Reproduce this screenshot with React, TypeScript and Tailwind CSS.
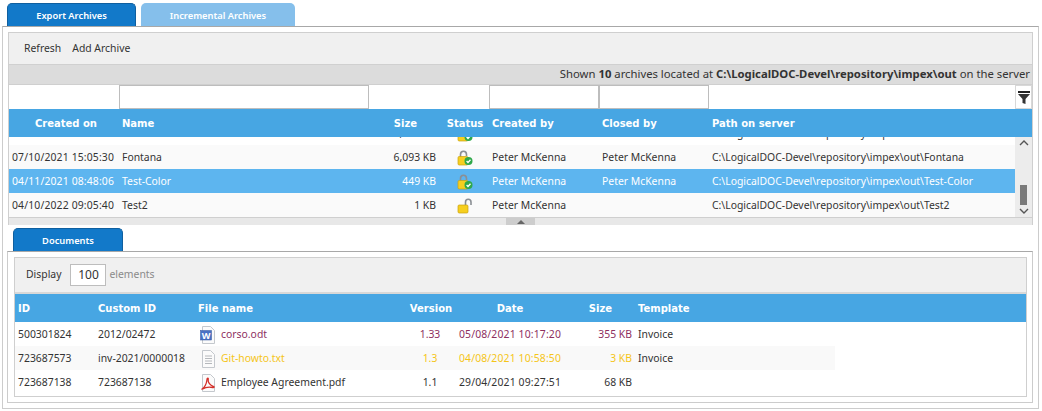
const ui = '"Noto Sans", "Open Sans", sans-serif';

function Lock({ ok }: { ok?: boolean }) {
  return (
    <svg width="16" height="16" viewBox="0 0 16 16" className="shrink-0">
      <path d="M3.500 8V4.600C3.500 2.600 4.800 1.300 6.500 1.300s3 1.300 3 3.300V6" fill="none" stroke="#8b8f94" strokeWidth="1.600" />
      <rect x="1" y="6.500" width="10" height="8.500" rx="1.200" fill="#f6cf1f" stroke="#c9a00e" strokeWidth="0.700" />
      {ok && <circle cx="11.500" cy="11" r="4" fill="#2fa84a" />}
      {ok && <path d="M9.600 11l1.400 1.500 2.500-2.800" fill="none" stroke="#fff" strokeWidth="1.300" />}
    </svg>
  );
}

function OpenLock() {
  return (
    <svg width="16" height="16" viewBox="0 0 16 16" className="shrink-0">
      <path d="M8.500 8V4C8.500 2.400 9.700 1.300 11.200 1.300S14 2.400 14 4v3" fill="none" stroke="#8b8f94" strokeWidth="1.600" />
      <rect x="1" y="7" width="10" height="8" rx="1.200" fill="#f6cf1f" stroke="#c9a00e" strokeWidth="0.700" />
    </svg>
  );
}

function FileIcon({ type }: { type: string }) {
  return (
    <svg width="16" height="18" viewBox="0 0 16 18">
      <path d="M2.500.5h8l4 4v13h-12z" fill="#fbfbfb" stroke="#c4c8cd" />
      {type === 'word' && <rect x="0.500" y="4.500" width="11" height="9.500" fill="#4a72c4" stroke="#33549c" strokeWidth="0.500" />}
      {type === 'word' && <text x="6" y="12.500" textAnchor="middle" fontSize="9" fontWeight="700" fill="#ffffff">W</text>}
      {type === 'txt' && <path d="M5 6h7M5 8.500h7M5 11h7M5 13.500h7" stroke="#b5b8bc" />}
      {type === 'pdf' && (
        <path d="M1.500 15.500C4 14 6.500 10 7 5.500c.2-2 1.600-1.500 1.200 0-.5 3 2 6 5 6.800 1.500.4 1 1.500-.5 1.200-3-.5-7-.5-10 1.500" fill="none" stroke="#d4302a" strokeWidth="1.300" />
      )}
    </svg>
  );
}

const archives = [
  { date: '07/10/2021 15:05:30', name: 'Fontana', size: '6,093 KB', closed: 'Peter McKenna', icon: 'ok' },
  { date: '04/11/2021 08:48:06', name: 'Test-Color', size: '449 KB', closed: 'Peter McKenna', icon: 'ok', selected: true },
  { date: '04/10/2022 09:05:40', name: 'Test2', size: '1 KB', closed: '', icon: 'open' },
];

const documents = [
  { id: '500301824', custom: '2012/02472', file: 'corso.odt', type: 'word', version: '1.33', date: '05/08/2021 10:17:20', size: '355 KB', template: 'Invoice', color: 'text-[#8e2f5f]' },
  { id: '723687573', custom: 'inv-2021/0000018', file: 'Git-howto.txt', type: 'txt', version: '1.3', date: '04/08/2021 10:58:50', size: '3 KB', template: 'Invoice', color: 'text-[#f5c518]', shaded: true },
  { id: '723687138', custom: '723687138', file: 'Employee Agreement.pdf', type: 'pdf', version: '1.1', date: '29/04/2021 09:27:51', size: '68 KB', template: '', color: 'text-[#333333]' },
];

function ArchiveCells({ a }: { a: { date: string; name: string; size: string; closed: string; icon: string } }) {
  return (
    <>
      <div className="w-[110px] pl-[3px] tracking-[0.15px]">{a.date}</div>
      <div className="w-[250px] pl-[3px]">{a.name}</div>
      <div className="w-[70px] text-right pr-[3px]">{a.size}</div>
      <div className="w-[50px] flex justify-center pl-[2px]">{a.icon === 'ok' ? <Lock ok /> : <OpenLock />}</div>
      <div className="w-[110px] pl-[3px]">Peter McKenna</div>
      <div className="w-[110px] pl-[3px]">{a.closed}</div>
      <div className="flex-1 pl-[3px]">C:\LogicalDOC-Devel\repository\impex\out\{a.name}</div>
    </>
  );
}

export default function App() {
  return (
    <div className="w-[1042px] h-[411px] bg-white text-[#333333] text-[10.4px] overflow-hidden pt-[3px] pl-[2px]" style={{ fontFamily: ui }}>
      <div className="flex pl-[5px] gap-[5px] h-[23px] font-semibold text-[9.300px] text-white">
        <div className="w-[129px] pt-[1px] rounded-t-[5px] bg-[#1279c9] border border-[#0f5f9f] border-b-0 flex items-center justify-center">Export Archives</div>
        <div className="w-[154px] pt-[2px] rounded-t-[5px] bg-[#85bfeb] flex items-center justify-center">Incremental Archives</div>
      </div>

      <div className="w-[1037px] h-[383px] border border-[#cccccc] border-t-[#a8a8a8] pt-[5px] pl-[5px]">
        <div className="w-[1025px] border border-[#cfcfcf] border-b-0">
          <div className="h-[32px] bg-[#f0f0f0] border-b border-[#d0d0d0] flex items-center gap-[11px] pl-[15px]">
            <span>Refresh</span>
            <span>Add Archive</span>
          </div>
          <div className="h-[20px] bg-[#dcdcdc] border-b border-[#cfcfcf] flex items-center justify-end pr-[2px] text-[11.300px]">
            <span>Shown <b>10</b> archives located at <b>C:\LogicalDOC-Devel\repository\impex\out</b> on the server</span>
          </div>

          <div className="h-[24px] flex bg-white">
            <div className="w-[110px]" />
            <div className="w-[250px] border border-[#bdbdbd]" />
            <div className="w-[120px]" />
            <div className="w-[110px] border border-[#bdbdbd]" />
            <div className="w-[110px] border border-[#bdbdbd]" />
            <div className="flex-1" />
            <div className="w-[17px] flex items-center justify-center border border-[#d8d8d8]">
              <svg width="14" height="15" viewBox="0 0 14 15">
                <path d="M1 1h12v2H1z" fill="#222222" />
                <path d="M1 4h12L8.500 9v5l-3-1V9z" fill="#333333" />
              </svg>
            </div>
          </div>

          <div className="h-[28px] bg-[#47a6e3] flex items-center text-white font-bold text-[10px]" style={{ fontFamily: '"DejaVu Sans", sans-serif' }}>
            <div className="w-[110px] text-center pl-[4px]">Created on</div>
            <div className="w-[250px] pl-[3px]">Name</div>
            <div className="w-[70px] text-right pr-[22px]">Size</div>
            <div className="w-[50px] text-center pl-[2px]">Status</div>
            <div className="w-[110px] pl-[3px]">Created by</div>
            <div className="w-[110px] pl-[3px]">Closed by</div>
            <div className="flex-1 pl-[3px]">Path on server</div>
          </div>

          <div className="flex h-[81px] border-b border-[#cfcfcf]">
            <div className="w-[1006px] overflow-hidden">
              <div className="h-[8px] overflow-hidden flex flex-col justify-end">
                <div className="h-[24px] pt-[1px] shrink-0 flex items-center">
                  <ArchiveCells a={{ date: '07/10/2021 14:52:11', name: 'Default', size: '2,310 KB', closed: 'Peter McKenna', icon: 'ok' }} />
                </div>
              </div>
              {archives.map((a) => (
                <div key={a.name} className={`h-[24px] pt-[1px] flex items-center ${a.selected ? 'bg-[#5db5ef] text-white' : 'bg-[#fafafa]'}`}>
                  <ArchiveCells a={a} />
                </div>
              ))}
            </div>
            <div className="flex-1 bg-[#ececec] flex flex-col items-center justify-between py-[3px]">
              <svg width="10" height="6" viewBox="0 0 10 6"><path d="M1 5l4-4 4 4" fill="none" stroke="#555" strokeWidth="1.400" /></svg>
              <div className="flex-1 flex flex-col justify-end pb-[3px]">
                <div className="w-[7px] h-[20px] bg-[#7a7a7a]" />
              </div>
              <svg width="10" height="6" viewBox="0 0 10 6"><path d="M1 1l4 4 4-4" fill="none" stroke="#555" strokeWidth="1.400" /></svg>
            </div>
          </div>

          <div className="h-[7px] bg-[#e8e8e8] flex justify-center">
            <div className="w-[29px] h-[7px] bg-[#cdcdcd] flex items-center justify-center">
              <div className="w-0 h-0 border-x-[4px] border-x-transparent border-b-[4px] border-b-[#666666]" />
            </div>
          </div>
        </div>

        <div className="pl-[5px] pt-[3px] h-[26px]">
          <div className="w-[110px] h-[23px] pt-[1px] rounded-t-[5px] bg-[#1279c9] border border-[#0f5f9f] border-b-0 flex items-center justify-center text-white font-semibold text-[9.300px]">Documents</div>
        </div>

        <div className="w-[1026px] h-[152px] -ml-[1px] border border-[#cccccc] border-t-[#a8a8a8] pt-[5px] pl-[6px] pr-[5px]">
          <div className="h-[140px] border border-[#cfcfcf]">
            <div className="h-[36px] bg-[#f0f0f0] border-b-2 border-[#d8d8d8] flex items-center pl-[11px]">
              <span>Display</span>
              <div className="w-[36px] h-[22px] ml-[9px] border border-[#bdbdbd] bg-white flex items-center justify-center text-[12px]">100</div>
              <span className="ml-[3px] text-[#8a8a8a]">elements</span>
            </div>
            <div className="h-[28px] bg-[#47a6e3] flex items-center text-white font-bold text-[10px]" style={{ fontFamily: '"DejaVu Sans", sans-serif' }}>
              <div className="w-[80px] pl-[3px]">ID</div>
              <div className="w-[100px] pl-[3px]">Custom ID</div>
              <div className="w-[210px] pl-[3px]">File name</div>
              <div className="w-[50px] text-center pl-[2px]">Version</div>
              <div className="w-[110px] text-center">Date</div>
              <div className="w-[67px] text-right pr-[20px]">Size</div>
              <div className="flex-1 pl-[6px]">Template</div>
            </div>
            {documents.map((d) => (
              <div key={d.id} className="h-[24px] flex items-center">
                <div className={`w-[820px] h-full pt-[1px] flex items-center ${d.shaded ? 'bg-[#f9f9f9]' : ''}`}>
                  <div className="w-[80px] pl-[3px]">{d.id}</div>
                  <div className="w-[100px] pl-[3px]">{d.custom}</div>
                  <div className="w-[210px] pl-[5px] flex items-center gap-[5px]">
                    <FileIcon type={d.type} />
                    <span className={d.color}>{d.file}</span>
                  </div>
                  <div className={`w-[50px] text-center ${d.color}`}>{d.version}</div>
                  <div className={`w-[110px] text-center tracking-[0.15px] ${d.color}`}>{d.date}</div>
                  <div className={`w-[67px] text-right ${d.color}`}>{d.size}</div>
                  <div className="flex-1 pl-[6px]">{d.template}</div>
                </div>
              </div>
            ))}
          </div>
        </div>
      </div>
    </div>
  );
}
